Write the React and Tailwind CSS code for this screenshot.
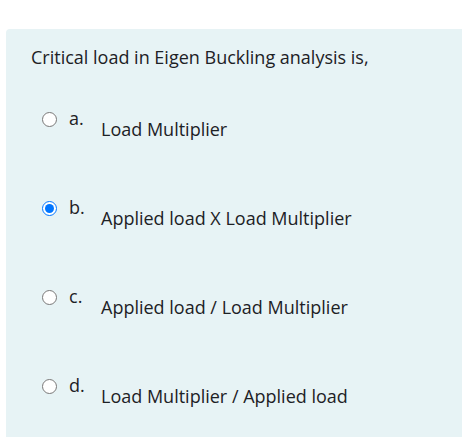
const options = [
    { key: "a", text: "Load Multiplier", checked: false },
    { key: "b", text: "Applied load X Load Multiplier", checked: true },
    { key: "c", text: "Applied load / Load Multiplier", checked: false },
    { key: "d", text: "Load Multiplier / Applied load", checked: false },
];

function App() {
    return (
        <div className="min-h-screen bg-white pt-[29px] pl-[6px]" style={{ fontFamily: '"Open Sans", "Noto Sans", sans-serif' }}>
            <div className="bg-[#e7f3f5] rounded-tl-[4px] min-h-[408px] pl-[25px] pt-[15px] text-[#1d2125]">
                <p className="text-[18px] leading-[27px]">
                    Critical load in Eigen Buckling analysis is,
                </p>
                <div className="mt-[34px] flex flex-col gap-[51px] pl-[11px]">
                    {options.map((o) => (
                        <label key={o.key} className="flex items-start">
                            <input
                                type="radio"
                                name="answer"
                                defaultChecked={o.checked}
                                className="w-[15px] h-[15px] mt-[7px] mr-[12px] accent-[#0075ff]"
                            />
                            <span className="text-[18px] leading-[27px] w-[32px]">{o.key}.</span>
                            <span className="text-[18px] leading-[27px] mt-[11px]">{o.text}</span>
                        </label>
                    ))}
                </div>
            </div>
        </div>
    );
}

export default App;
